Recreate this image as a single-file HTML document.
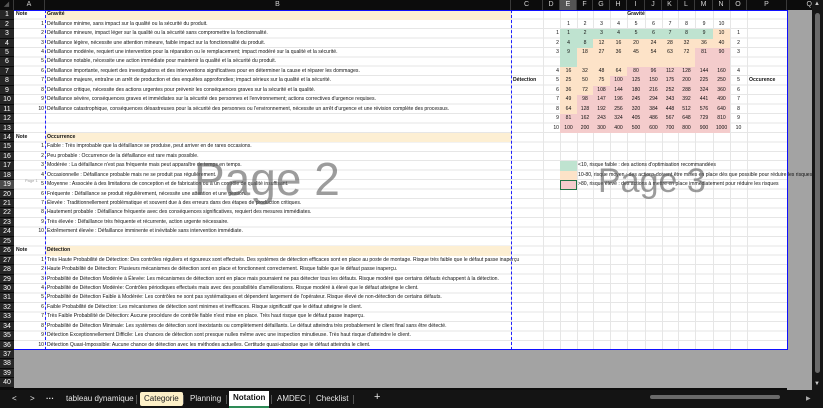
<!DOCTYPE html>
<html><head><meta charset="utf-8">
<style>
*{margin:0;padding:0;box-sizing:border-box}
body{width:823px;height:408px;overflow:hidden;background:#0c0c0c;font-family:"Liberation Sans",sans-serif;position:relative}
.colh{position:absolute;top:0;left:0;height:10.3px;width:812px;background:#0c0c0c}
.colh div{position:absolute;top:0;height:10.3px;color:#cfcfcf;font-size:7px;line-height:10.3px;text-align:center;border-right:1px solid #3a3a3a}
.sheet{position:absolute;left:14px;top:10.3px;width:773px;height:378px;background:#a3a3a3}
.white{position:absolute;left:14px;top:10.3px;width:773px;height:340.2px;background:#fff;
 background-image:repeating-linear-gradient(to bottom,transparent 0,transparent 8.45px,#e6e6e6 8.45px,#e6e6e6 9.45px)}
.vl{position:absolute;top:10.3px;height:340.2px;width:1px;background:#e6e6e6}
.g{position:absolute;left:0;top:10.3px;width:787px;height:378px;display:grid;
 grid-template-columns:14px 31px 466px 32px 17px 17px 16px 17px 17px 18px 17px 16px 17px 18px 17px 17px 40px;
 grid-template-rows:repeat(40,9.45px);font-size:5.1px;line-height:9.45px;color:#111;white-space:nowrap}
.rh{grid-column:1;background:#262626;color:#fff;font-size:7px;text-align:center;border-bottom:1px solid #0c0c0c;line-height:9px}
.n{text-align:right;padding-right:1px}
.t{padding-left:2px;overflow:visible}
.or{background:#fdefd3}
.gr{background:#bfe3d0}
.oa{background:#fde3c8}
.pk{background:#f4cccc}
.c{text-align:center}
.b{font-weight:bold}
.wm{position:absolute;color:rgba(90,90,90,.6);font-family:"Liberation Sans",sans-serif;white-space:nowrap}
.tabs{position:absolute;left:0;top:390px;width:823px;height:18px;background:#141414;color:#e8e8e8;font-size:8px}
.tabs span{position:absolute;top:4px;line-height:10px}
.sep{position:absolute;top:5px;width:1px;height:9px;background:#555}
</style></head><body>
<div class="colh">
<div style="left:0;width:14px;color:#555">◢</div>
<div style="left:14px;width:31px">A</div>
<div style="left:45px;width:466px">B</div>
<div style="left:511px;width:32px">C</div>
<div style="left:543px;width:17px">D</div>
<div style="left:560px;width:17px;background:#555;color:#fff">E</div>
<div style="left:577px;width:16px">F</div>
<div style="left:593px;width:17px">G</div>
<div style="left:610px;width:17px">H</div>
<div style="left:627px;width:18px">I</div>
<div style="left:645px;width:17px">J</div>
<div style="left:662px;width:16px">K</div>
<div style="left:678px;width:17px">L</div>
<div style="left:695px;width:18px">M</div>
<div style="left:713px;width:17px">N</div>
<div style="left:730px;width:17px">O</div>
<div style="left:747px;width:40px">P</div>
<div style="left:787px;width:25px;border:none;text-align:right">Q</div>
</div>
<div class="sheet"></div>
<div style="position:absolute;left:787px;top:10.3px;width:25px;height:380px;background:#a3a3a3"></div>
<div class="white"></div>
<div class="vl" style="left:45px"></div><div class="vl" style="left:511px"></div><div class="vl" style="left:543px"></div><div class="vl" style="left:560px"></div><div class="vl" style="left:577px"></div><div class="vl" style="left:593px"></div><div class="vl" style="left:610px"></div><div class="vl" style="left:627px"></div><div class="vl" style="left:645px"></div><div class="vl" style="left:662px"></div><div class="vl" style="left:678px"></div><div class="vl" style="left:695px"></div><div class="vl" style="left:713px"></div><div class="vl" style="left:730px"></div><div class="vl" style="left:747px"></div>

<div class="g">
<div class="rh" style="grid-row:1">1</div><div class="rh" style="grid-row:2">2</div><div class="rh" style="grid-row:3">3</div><div class="rh" style="grid-row:4">4</div><div class="rh" style="grid-row:5">5</div><div class="rh" style="grid-row:6">6</div><div class="rh" style="grid-row:7">7</div><div class="rh" style="grid-row:8">8</div><div class="rh" style="grid-row:9">9</div><div class="rh" style="grid-row:10">10</div><div class="rh" style="grid-row:11">11</div><div class="rh" style="grid-row:12">12</div><div class="rh" style="grid-row:13">13</div><div class="rh" style="grid-row:14">14</div><div class="rh" style="grid-row:15">15</div><div class="rh" style="grid-row:16">16</div><div class="rh" style="grid-row:17">17</div><div class="rh" style="grid-row:18">18</div><div class="rh" style="grid-row:19;background:#4a4a4a">19</div><div class="rh" style="grid-row:20">20</div><div class="rh" style="grid-row:21">21</div><div class="rh" style="grid-row:22">22</div><div class="rh" style="grid-row:23">23</div><div class="rh" style="grid-row:24">24</div><div class="rh" style="grid-row:25">25</div><div class="rh" style="grid-row:26">26</div><div class="rh" style="grid-row:27">27</div><div class="rh" style="grid-row:28">28</div><div class="rh" style="grid-row:29">29</div><div class="rh" style="grid-row:30">30</div><div class="rh" style="grid-row:31">31</div><div class="rh" style="grid-row:32">32</div><div class="rh" style="grid-row:33">33</div><div class="rh" style="grid-row:34">34</div><div class="rh" style="grid-row:35">35</div><div class="rh" style="grid-row:36">36</div><div class="rh" style="grid-row:37">37</div><div class="rh" style="grid-row:38">38</div><div class="rh" style="grid-row:39">39</div><div class="rh" style="grid-row:40">40</div>

<div class="b t" style="grid-area:1/2">Note</div><div class="b t or" style="grid-area:1/3">Gravité</div>
<div class="n" style="grid-area:2/2">1</div><div class="t" style="grid-area:2/3">Défaillance minime, sans impact sur la qualité ou la sécurité du produit.</div>
<div class="n" style="grid-area:3/2">2</div><div class="t" style="grid-area:3/3">Défaillance mineure, impact léger sur la qualité ou la sécurité sans compromettre la fonctionnalité.</div>
<div class="n" style="grid-area:4/2">3</div><div class="t" style="grid-area:4/3">Défaillance légère, nécessite une attention mineure, faible impact sur la fonctionnalité du produit.</div>
<div class="n" style="grid-area:5/2">4</div><div class="t" style="grid-area:5/3">Défaillance modérée, requiert une intervention pour la réparation ou le remplacement; impact modéré sur la qualité et la sécurité.</div>
<div class="n" style="grid-area:6/2">5</div><div class="t" style="grid-area:6/3">Défaillance notable, nécessite une action immédiate pour maintenir la qualité et la sécurité du produit.</div>
<div class="n" style="grid-area:7/2">6</div><div class="t" style="grid-area:7/3">Défaillance importante, requiert des investigations et des interventions significatives pour en déterminer la cause et réparer les dommages.</div>
<div class="n" style="grid-area:8/2">7</div><div class="t" style="grid-area:8/3">Défaillance majeure, entraîne un arrêt de production et des enquêtes approfondies; impact sérieux sur la qualité et la sécurité.</div>
<div class="n" style="grid-area:9/2">8</div><div class="t" style="grid-area:9/3">Défaillance critique, nécessite des actions urgentes pour prévenir les conséquences graves sur la sécurité et la qualité.</div>
<div class="n" style="grid-area:10/2">9</div><div class="t" style="grid-area:10/3">Défaillance sévère, conséquences graves et immédiates sur la sécurité des personnes et l'environnement; actions correctives d'urgence requises.</div>
<div class="n" style="grid-area:11/2">10</div><div class="t" style="grid-area:11/3">Défaillance catastrophique, conséquences désastreuses pour la sécurité des personnes ou l'environnement, nécessite un arrêt d'urgence et une révision complète des processus.</div>

<div class="b t" style="grid-area:14/2">Note</div><div class="b t or" style="grid-area:14/3">Occurrence</div>
<div class="n" style="grid-area:15/2">1</div><div class="t" style="grid-area:15/3">Faible : Très improbable que la défaillance se produise, peut arriver en de rares occasions.</div>
<div class="n" style="grid-area:16/2">2</div><div class="t" style="grid-area:16/3">Peu probable : Occurrence de la défaillance est rare mais possible.</div>
<div class="n" style="grid-area:17/2">3</div><div class="t" style="grid-area:17/3">Modérée : La défaillance n'est pas fréquente mais peut apparaître de temps en temps.</div>
<div class="n" style="grid-area:18/2">4</div><div class="t" style="grid-area:18/3">Occasionnelle : Défaillance probable mais ne se produit pas régulièrement.</div>
<div class="n" style="grid-area:19/2">5</div><div class="t" style="grid-area:19/3">Moyenne : Associée à des limitations de conception et de fabrication ou à un contrôle de qualité insuffisant.</div>
<div class="n" style="grid-area:20/2">6</div><div class="t" style="grid-area:20/3">Fréquente : Défaillance se produit régulièrement, nécessite une attention et une gestion.</div>
<div class="n" style="grid-area:21/2">7</div><div class="t" style="grid-area:21/3">Élevée : Traditionnellement problématique et souvent due à des erreurs dans des étapes de production critiques.</div>
<div class="n" style="grid-area:22/2">8</div><div class="t" style="grid-area:22/3">Hautement probable : Défaillance fréquente avec des conséquences significatives, requiert des mesures immédiates.</div>
<div class="n" style="grid-area:23/2">9</div><div class="t" style="grid-area:23/3">Très élevée : Défaillance très fréquente et récurrente, action urgente nécessaire.</div>
<div class="n" style="grid-area:24/2">10</div><div class="t" style="grid-area:24/3">Extrêmement élevée : Défaillance imminente et inévitable sans intervention immédiate.</div>

<div class="b t" style="grid-area:26/2">Note</div><div class="b t or" style="grid-area:26/3">Détection</div>
<div class="n" style="grid-area:27/2">1</div><div class="t" style="grid-area:27/3">Très Haute Probabilité de Détection: Des contrôles réguliers et rigoureux sont effectués. Des systèmes de détection efficaces sont en place au poste de montage. Risque très faible que le défaut passe inaperçu</div>
<div class="n" style="grid-area:28/2">2</div><div class="t" style="grid-area:28/3">Haute Probabilité de Détection: Plusieurs mécanismes de détection sont en place et fonctionnent correctement. Risque faible que le défaut passe inaperçu.</div>
<div class="n" style="grid-area:29/2">3</div><div class="t" style="grid-area:29/3">Probabilité de Détection Modérée à Élevée: Les mécanismes de détection sont en place mais pourraient ne pas détecter tous les défauts. Risque modéré que certains défauts échappent à la détection.</div>
<div class="n" style="grid-area:30/2">4</div><div class="t" style="grid-area:30/3">Probabilité de Détection Modérée: Contrôles périodiques effectués mais avec des possibilités d'améliorations. Risque modéré à élevé que le défaut atteigne le client.</div>
<div class="n" style="grid-area:31/2">5</div><div class="t" style="grid-area:31/3">Probabilité de Détection Faible à Modérée: Les contrôles ne sont pas systématiques et dépendent largement de l'opérateur. Risque élevé de non-détection de certains défauts.</div>
<div class="n" style="grid-area:32/2">6</div><div class="t" style="grid-area:32/3">Faible Probabilité de Détection: Les mécanismes de détection sont minimes et inefficaces. Risque significatif que le défaut atteigne le client.</div>
<div class="n" style="grid-area:33/2">7</div><div class="t" style="grid-area:33/3">Très Faible Probabilité de Détection: Aucune procédure de contrôle fiable n'est mise en place. Très haut risque que le défaut passe inaperçu.</div>
<div class="n" style="grid-area:34/2">8</div><div class="t" style="grid-area:34/3">Probabilité de Détection Minimale: Les systèmes de détection sont inexistants ou complètement défaillants. Le défaut atteindra très probablement le client final sans être détecté.</div>
<div class="n" style="grid-area:35/2">9</div><div class="t" style="grid-area:35/3">Détection Exceptionnellement Difficile: Les chances de détection sont presque nulles même avec une inspection minutieuse. Très haut risque d'atteindre le client.</div>
<div class="n" style="grid-area:36/2">10</div><div class="t" style="grid-area:36/3">Détection Quasi-Impossible: Aucune chance de détection avec les méthodes actuelles. Certitude quasi-absolue que le défaut atteindra le client.</div>

<div class="b c" style="grid-area:1/10">Gravité</div>
<div class="c" style="grid-area:2/6">1</div><div class="c" style="grid-area:2/7">2</div><div class="c" style="grid-area:2/8">3</div><div class="c" style="grid-area:2/9">4</div><div class="c" style="grid-area:2/10">5</div><div class="c" style="grid-area:2/11">6</div><div class="c" style="grid-area:2/12">7</div><div class="c" style="grid-area:2/13">8</div><div class="c" style="grid-area:2/14">9</div><div class="c" style="grid-area:2/15">10</div>

<div class="n" style="grid-area:3/5">1</div><div class="c gr" style="grid-area:3/6">1</div><div class="c gr" style="grid-area:3/7">2</div><div class="c gr" style="grid-area:3/8">3</div><div class="c gr" style="grid-area:3/9">4</div><div class="c gr" style="grid-area:3/10">5</div><div class="c gr" style="grid-area:3/11">6</div><div class="c gr" style="grid-area:3/12">7</div><div class="c gr" style="grid-area:3/13">8</div><div class="c gr" style="grid-area:3/14">9</div><div class="c oa" style="grid-area:3/15">10</div><div class="c" style="grid-area:3/16">1</div>
<div class="n" style="grid-area:4/5">2</div><div class="c gr" style="grid-area:4/6">4</div><div class="c gr" style="grid-area:4/7">8</div><div class="c oa" style="grid-area:4/8">12</div><div class="c oa" style="grid-area:4/9">16</div><div class="c oa" style="grid-area:4/10">20</div><div class="c oa" style="grid-area:4/11">24</div><div class="c oa" style="grid-area:4/12">28</div><div class="c oa" style="grid-area:4/13">32</div><div class="c oa" style="grid-area:4/14">36</div><div class="c oa" style="grid-area:4/15">40</div><div class="c" style="grid-area:4/16">2</div>
<div class="n" style="grid-area:5/5">3</div><div class="c gr" style="grid-area:5/6">9</div><div class="c oa" style="grid-area:5/7">18</div><div class="c oa" style="grid-area:5/8">27</div><div class="c oa" style="grid-area:5/9">36</div><div class="c oa" style="grid-area:5/10">45</div><div class="c oa" style="grid-area:5/11">54</div><div class="c oa" style="grid-area:5/12">63</div><div class="c oa" style="grid-area:5/13">72</div><div class="c pk" style="grid-area:5/14">81</div><div class="c pk" style="grid-area:5/15">90</div><div class="c" style="grid-area:5/16">3</div>
<div class="gr" style="grid-area:6/6"></div><div class="oa" style="grid-area:6/7/7/14"></div><div class="pk" style="grid-area:6/14/7/16"></div>
<div class="n" style="grid-area:7/5">4</div><div class="c oa" style="grid-area:7/6">16</div><div class="c oa" style="grid-area:7/7">32</div><div class="c oa" style="grid-area:7/8">48</div><div class="c oa" style="grid-area:7/9">64</div><div class="c pk" style="grid-area:7/10">80</div><div class="c pk" style="grid-area:7/11">96</div><div class="c pk" style="grid-area:7/12">112</div><div class="c pk" style="grid-area:7/13">128</div><div class="c pk" style="grid-area:7/14">144</div><div class="c pk" style="grid-area:7/15">160</div><div class="c" style="grid-area:7/16">4</div>
<div class="b t" style="grid-area:8/4">Détection</div><div class="b t" style="grid-area:8/17">Occurence</div>
<div class="n" style="grid-area:8/5">5</div><div class="c oa" style="grid-area:8/6">25</div><div class="c oa" style="grid-area:8/7">50</div><div class="c oa" style="grid-area:8/8">75</div><div class="c pk" style="grid-area:8/9">100</div><div class="c pk" style="grid-area:8/10">125</div><div class="c pk" style="grid-area:8/11">150</div><div class="c pk" style="grid-area:8/12">175</div><div class="c pk" style="grid-area:8/13">200</div><div class="c pk" style="grid-area:8/14">225</div><div class="c pk" style="grid-area:8/15">250</div><div class="c" style="grid-area:8/16">5</div>
<div class="n" style="grid-area:9/5">6</div><div class="c oa" style="grid-area:9/6">36</div><div class="c oa" style="grid-area:9/7">72</div><div class="c pk" style="grid-area:9/8">108</div><div class="c pk" style="grid-area:9/9">144</div><div class="c pk" style="grid-area:9/10">180</div><div class="c pk" style="grid-area:9/11">216</div><div class="c pk" style="grid-area:9/12">252</div><div class="c pk" style="grid-area:9/13">288</div><div class="c pk" style="grid-area:9/14">324</div><div class="c pk" style="grid-area:9/15">360</div><div class="c" style="grid-area:9/16">6</div>
<div class="n" style="grid-area:10/5">7</div><div class="c oa" style="grid-area:10/6">49</div><div class="c pk" style="grid-area:10/7">98</div><div class="c pk" style="grid-area:10/8">147</div><div class="c pk" style="grid-area:10/9">196</div><div class="c pk" style="grid-area:10/10">245</div><div class="c pk" style="grid-area:10/11">294</div><div class="c pk" style="grid-area:10/12">343</div><div class="c pk" style="grid-area:10/13">392</div><div class="c pk" style="grid-area:10/14">441</div><div class="c pk" style="grid-area:10/15">490</div><div class="c" style="grid-area:10/16">7</div>
<div class="n" style="grid-area:11/5">8</div><div class="c oa" style="grid-area:11/6">64</div><div class="c pk" style="grid-area:11/7">128</div><div class="c pk" style="grid-area:11/8">192</div><div class="c pk" style="grid-area:11/9">256</div><div class="c pk" style="grid-area:11/10">320</div><div class="c pk" style="grid-area:11/11">384</div><div class="c pk" style="grid-area:11/12">448</div><div class="c pk" style="grid-area:11/13">512</div><div class="c pk" style="grid-area:11/14">576</div><div class="c pk" style="grid-area:11/15">640</div><div class="c" style="grid-area:11/16">8</div>
<div class="n" style="grid-area:12/5">9</div><div class="c pk" style="grid-area:12/6">81</div><div class="c pk" style="grid-area:12/7">162</div><div class="c pk" style="grid-area:12/8">243</div><div class="c pk" style="grid-area:12/9">324</div><div class="c pk" style="grid-area:12/10">405</div><div class="c pk" style="grid-area:12/11">486</div><div class="c pk" style="grid-area:12/12">567</div><div class="c pk" style="grid-area:12/13">648</div><div class="c pk" style="grid-area:12/14">729</div><div class="c pk" style="grid-area:12/15">810</div><div class="c" style="grid-area:12/16">9</div>
<div class="n" style="grid-area:13/5">10</div><div class="c pk" style="grid-area:13/6">100</div><div class="c pk" style="grid-area:13/7">200</div><div class="c pk" style="grid-area:13/8">300</div><div class="c pk" style="grid-area:13/9">400</div><div class="c pk" style="grid-area:13/10">500</div><div class="c pk" style="grid-area:13/11">600</div><div class="c pk" style="grid-area:13/12">700</div><div class="c pk" style="grid-area:13/13">800</div><div class="c pk" style="grid-area:13/14">900</div><div class="c pk" style="grid-area:13/15">1000</div><div class="c" style="grid-area:13/16">10</div>

<div class="gr" style="grid-area:17/6"></div><div class="t" style="grid-area:17/7;padding-left:1px">&lt;10, risque faible : des actions d'optimisation recommandées</div>
<div class="oa" style="grid-area:18/6"></div><div class="t" style="grid-area:18/7;padding-left:1px">10-80, risque moyen : des actions doivent être mises en place dès que possible pour réduire les risques</div>
<div class="pk" style="grid-area:19/6;border:1px solid #217346"></div><div class="t" style="grid-area:19/7;padding-left:1px">&gt;80, risque élevé : des actions à mettre en place immédiatement pour réduire les risques</div>
</div>

<div style="position:absolute;left:44.5px;top:10.3px;height:340px;border-left:1px dashed #2020ff"></div>
<div style="position:absolute;left:510.5px;top:10.3px;height:340px;border-left:1px dashed #2020ff"></div>
<div style="position:absolute;left:14px;top:10.3px;width:774px;height:340px;border:1.5px solid #1010ff;border-left:none;border-top:1px solid #1010ff"></div>

<div class="wm" style="left:194px;top:152px;font-size:46px">Page 2</div>
<div class="wm" style="left:598px;top:162px;font-size:34px">Page 3</div>
<div class="wm" style="left:25px;top:178px;font-size:4px">Page 1</div>

<div style="position:absolute;left:812px;top:0;width:11px;height:390px;background:#161616"></div>
<div style="position:absolute;left:815px;top:13px;width:5px;height:360px;background:#6a6a6a;border-radius:3px"></div>
<div style="position:absolute;left:814px;top:1px;color:#ccc;font-size:6px">▲</div>
<div style="position:absolute;left:814px;top:381px;color:#ccc;font-size:6px">▼</div>

<div class="tabs">
<span style="left:12px">&lt;</span><span style="left:30px">&gt;</span><span style="left:46px;font-weight:bold">···</span>
<span style="left:66px">tableau dynamique</span><div class="sep" style="left:136px"></div>
<span style="left:140px;top:2px;padding:2px 4px;background:#fdf0c8;color:#222;border-radius:2px">Categorie</span><div class="sep" style="left:183px"></div>
<span style="left:190px">Planning</span><div class="sep" style="left:226px"></div>
<span style="left:229px;top:1px;padding:2px 4px 3px;background:#fff;color:#111;font-weight:bold;border-bottom:2px solid #2e8b57">Notation</span><div class="sep" style="left:271px"></div>
<span style="left:277px">AMDEC</span><div class="sep" style="left:309px"></div>
<span style="left:316px">Checklist</span><div class="sep" style="left:353px"></div>
<span style="left:374px;font-size:11px;top:2px">+</span>
<div style="position:absolute;left:650px;top:5px;width:130px;height:4px;background:#6a6a6a;border-radius:2px"></div>
<span style="left:806px;font-size:6px;color:#aaa">▶</span>
</div>
</body></html>
